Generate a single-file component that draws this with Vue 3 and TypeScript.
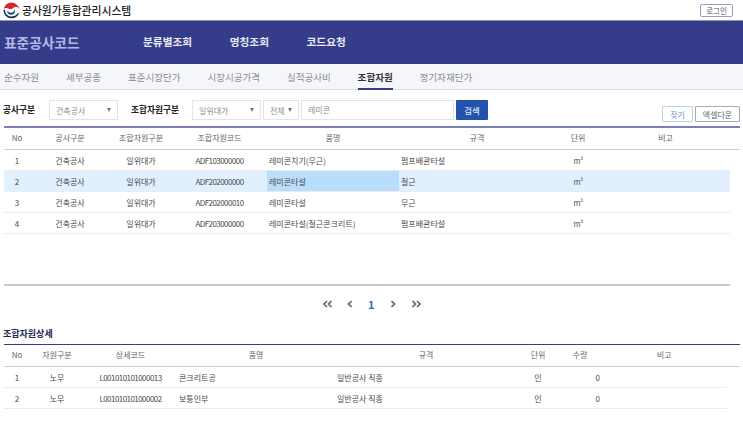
<script setup lang="ts">
const tabs = ['순수자원', '세부공종', '표준시장단가', '시장시공가격', '실적공사비', '조합자원', '정기자재단가']
const rows = [
  ['1', '건축공사', '일위대가', 'ADF103000000', '레미콘치기(무근)', '펌프배관타설', 'm³', ''],
  ['2', '건축공사', '일위대가', 'ADF202000000', '레미콘타설', '철근', 'm³', ''],
  ['3', '건축공사', '일위대가', 'ADF202000010', '레미콘타설', '무근', 'm³', ''],
  ['4', '건축공사', '일위대가', 'ADF203000000', '레미콘타설(철근콘크리트)', '펌프배관타설', 'm³', ''],
]
const heads = ['No', '공사구분', '조합자원구분', '조합자원코드', '품명', '규격', '단위', '비고']
const dHeads = ['No', '자원구분', '상세코드', '품명', '규격', '단위', '수량', '비고']
const dRows = [
  ['1', '노무', 'L001010101000013', '콘크리트공', '일반공사 직종', '인', '0', ''],
  ['2', '노무', 'L001010101000002', '보통인부', '일반공사 직종', '인', '0', ''],
]
</script>

<template>
  <div class="page">
    <div class="top">
      <div class="brand">
        <svg class="logo" viewBox="0 0 20 20" width="17" height="17">
          <circle cx="10" cy="10" r="9.6" fill="#fff" />
          <path d="M0.6 9.4A9.5 9.5 0 0 0 19.4 11.6C18.6 13 17.6 13.6 16.6 13.8 15.6 15.8 13 17 10 17 5.8 17 2.4 14 2.4 9.6 2 9 1 9 0.6 9.4Z" fill="#14294f" />
          <path d="M0.8 8A9.4 9.4 0 0 1 19.2 8.2C17.6 5.4 14.6 5 12.8 6.6 11.4 7.8 10 8.8 8 8.2 5.4 7.4 2.4 6 0.8 8Z" fill="#d8262e" />
          <path d="M4.4 10.6C6 11.4 7.8 12.8 10 12.6 12.2 12.4 13.6 10.6 13.6 8.6 15.2 11.2 13.4 15 9.8 15 7 15 5 13 4.4 10.6Z" fill="#17477f" />
        </svg>
        <span class="sysname">공사원가통합관리시스템</span>
      </div>
      <button class="login">로그인</button>
    </div>

    <header class="hdr">
      <div class="hdr-title">표준공사코드</div>
      <nav class="hdr-nav">
        <a>분류별조회</a>
        <a>명칭조회</a>
        <a>코드요청</a>
      </nav>
    </header>

    <div class="tabs">
      <span v-for="t in tabs" :key="t" class="tab" :class="{ on: t === '조합자원' }">{{ t }}</span>
    </div>

    <div class="filter">
      <label class="lbl lbl1">공사구분</label>
      <div class="sel s1"><span>건축공사</span><i></i></div>
      <label class="lbl lbl2">조합자원구분</label>
      <div class="sel s2"><span>일위대가</span><i></i></div>
      <div class="sel s3"><span>전체</span><i></i></div>
      <div class="inp">레미콘</div>
      <button class="search">검색</button>
      <div class="right">
        <button class="b-find">찾기</button>
        <button class="b-xls">엑셀다운</button>
      </div>
    </div>

    <section class="grid-a">
      <div class="row head">
        <div v-for="h in heads" :key="h" class="c">{{ h }}</div>
      </div>
      <div v-for="(r, i) in rows" :key="i" class="row" :class="{ sel2: i === 1 }">
        <div
          v-for="(v, j) in r"
          :key="j"
          class="c"
          :class="{ left: j === 4 || j === 5, hit: i === 1 && j === 4, code: j === 3, unit: j === 6 }"
        >{{ v }}</div>
      </div>
      <div class="end"></div>
    </section>

    <div class="pager">
      <svg width="11" height="8" viewBox="0 0 11 8"><path d="M5 1 2 4l3 3M9.5 1 6.5 4l3 3" fill="none" stroke="#5f6470" stroke-width="1.7" /></svg>
      <svg class="p2" width="6" height="8" viewBox="0 0 6 8"><path d="M4.5 1 1.5 4l3 3" fill="none" stroke="#5f6470" stroke-width="1.7" /></svg>
      <span class="pnum">1</span>
      <svg class="p3" width="6" height="8" viewBox="0 0 6 8"><path d="M1.5 1l3 3-3 3" fill="none" stroke="#5f6470" stroke-width="1.7" /></svg>
      <svg class="p4" width="11" height="8" viewBox="0 0 11 8"><path d="M1.5 1l3 3-3 3M6 1l3 3-3 3" fill="none" stroke="#5f6470" stroke-width="1.7" /></svg>
    </div>

    <h2 class="sub">조합자원상세</h2>

    <section class="grid-b">
      <div class="row head">
        <div v-for="h in dHeads" :key="h" class="c">{{ h }}</div>
      </div>
      <div v-for="(r, i) in dRows" :key="i" class="row">
        <div
          v-for="(v, j) in r"
          :key="j"
          class="c"
          :class="{ left: j === 3 || j === 4, code: j === 2, num: j === 6 }"
        >{{ v }}</div>
      </div>
    </section>
  </div>
</template>

<style>
html, body { margin: 0; background: #fff; }
</style>

<style scoped>
.page {
  width: 743px;
  height: 427px;
  overflow: hidden;
  font-family: "Noto Sans CJK KR", "Noto Sans", sans-serif;
  color: #4a4a4a;
  font-size: 8px;
  background: #fff;
}
button { font-family: inherit; padding: 0; cursor: pointer; }

.top {
  height: 21px;
  box-sizing: border-box;
  display: flex;
  align-items: center;
  justify-content: space-between;
  padding: 0 10px 0 3px;
  border-bottom: 1px solid #8f92bf;
}
.brand { display: flex; align-items: center; gap: 2px; }
.logo { display: block; }
.sysname { font-size: 10.8px; font-weight: 500; color: #222; }
.login {
  width: 33px;
  height: 13px;
  font-size: 7.5px;
  line-height: 11px;
  color: #555;
  background: #fff;
  border: 1px solid #9a9cc4;
  border-radius: 2px;
}

.hdr {
  height: 43px;
  background: #353c8a;
  display: flex;
  align-items: center;
  padding-bottom: 1px;
  box-sizing: border-box;
}
.hdr-title {
  width: 143px;
  padding-left: 4px;
  box-sizing: border-box;
  font-size: 13.7px;
  line-height: 16px;
  font-weight: 700;
  color: #b4b8e6;
}
.hdr-nav { display: flex; gap: 37.5px; line-height: 14px; }
.hdr-nav a { font-size: 10.7px; font-weight: 700; color: #e8e9f6; }

.tabs {
  height: 26px;
  box-sizing: border-box;
  background: #f5f6fa;
  border-bottom: 1px solid #dcdde3;
  display: flex;
  gap: 26.8px;
  padding-left: 4px;
}
.tab {
  font-size: 9.55px;
  line-height: 26px;
  color: #8b8d94;
  height: 26px;
  box-sizing: border-box;
}
.tab.on {
  color: #333;
  font-weight: 700;
  border-bottom: 2px solid #353c8a;
}

.filter {
  height: 36px;
  padding: 10px 3px 0 3px;
  box-sizing: border-box;
  display: flex;
  align-items: flex-start;
}
.lbl { font-size: 8.7px; font-weight: 700; color: #222; line-height: 20px; }
.lbl1 { width: 46px; }
.lbl2 { width: 61px; margin-left: 13px; }
.sel {
  height: 20px;
  box-sizing: border-box;
  border: 1px solid #e2e3e8;
  display: flex;
  align-items: center;
  justify-content: space-between;
  padding: 0 6px;
  color: #8d8f96;
  font-size: 8px;
}
.sel i {
  width: 0;
  height: 0;
  border-left: 2px solid transparent;
  border-right: 2px solid transparent;
  border-top: 4px solid #777;
}
.s1 { width: 69px; }
.s2 { width: 69px; margin-right: 2px; }
.s3 { width: 36px; margin-right: 2px; }
.inp {
  width: 153px;
  height: 20px;
  box-sizing: border-box;
  border: 1px solid #e2e3e8;
  padding-left: 6px;
  line-height: 18px;
  color: #8d8f96;
}
.search {
  width: 32px;
  height: 20px;
  margin-left: 2px;
  background: #2353ab;
  color: #dfe7f7;
  border: 0;
  border-radius: 1px;
  font-size: 8.4px;
  font-weight: 500;
}
.right {
  margin-left: auto;
  display: flex;
  gap: 2px;
  padding-top: 6px;
}
.b-find, .b-xls {
  height: 16px;
  font-size: 8px;
  background: #fff;
  border-radius: 1px;
}
.b-find { width: 31px; color: #6f93c8; border: 1px solid #b9d2ee; }
.b-xls { width: 45px; color: #666; border: 1px solid #a9abb3; }

.grid-a {
  margin: 0 3px 0 4px;
  border-top: 2px solid #7b80b8;
  height: 160px;
  box-sizing: border-box;
  display: flex;
  flex-direction: column;
}
.end {
  margin-top: auto;
  width: 726px;
  height: 2px;
  background: #c9c9c9;
}
.grid-b {
  margin: 0 3px 0 4px;
  border-top: 1px solid #353c8a;
}
.row {
  display: grid;
  flex: none;
  height: 21px;
  box-sizing: border-box;
  border-bottom: 1px solid #ececee;
  width: 726px;
  align-items: stretch;
}
.grid-a .row { grid-template-columns: 26px 80px 62px 95px 132px 156px 46px 129px; }
.grid-b .row { grid-template-columns: 26px 54px 93px 158px 182px 42px 42px 126px; width: 723px; }
.row.head {
  height: 22px;
  border-bottom: 1px solid #cfcfd2;
  width: 736px;
  color: #666;
}
.grid-b .row.head { width: 736px; }
.c {
  text-align: center;
  line-height: 21px;
  white-space: nowrap;
  overflow: hidden;
}
.row.head .c { line-height: 20px; }
.c.left { text-align: left; padding-left: 2px; }
.c.code { letter-spacing: -0.55px; }
.c.unit { font-size: 7.5px; letter-spacing: -0.6px; }
.c.num { text-align: right; padding-right: 1px; }
.sel2 { background: #e1f0fe; }
.c.hit { background: #b9defc; }

.pager {
  height: 36px;
  display: flex;
  align-items: center;
  padding-left: 322px;
}
.p2 { margin-left: 14px; }
.pnum { margin-left: 15px; font-size: 11px; font-weight: 700; color: #2f6fc4; width: 7px; }
.p3 { margin-left: 15px; }
.p4 { margin-left: 15px; }

.sub {
  margin: 0 0 0 3px;
  height: 22px;
  line-height: 23px;
  font-size: 9px;
  font-weight: 700;
  color: #23284f;
}
</style>
